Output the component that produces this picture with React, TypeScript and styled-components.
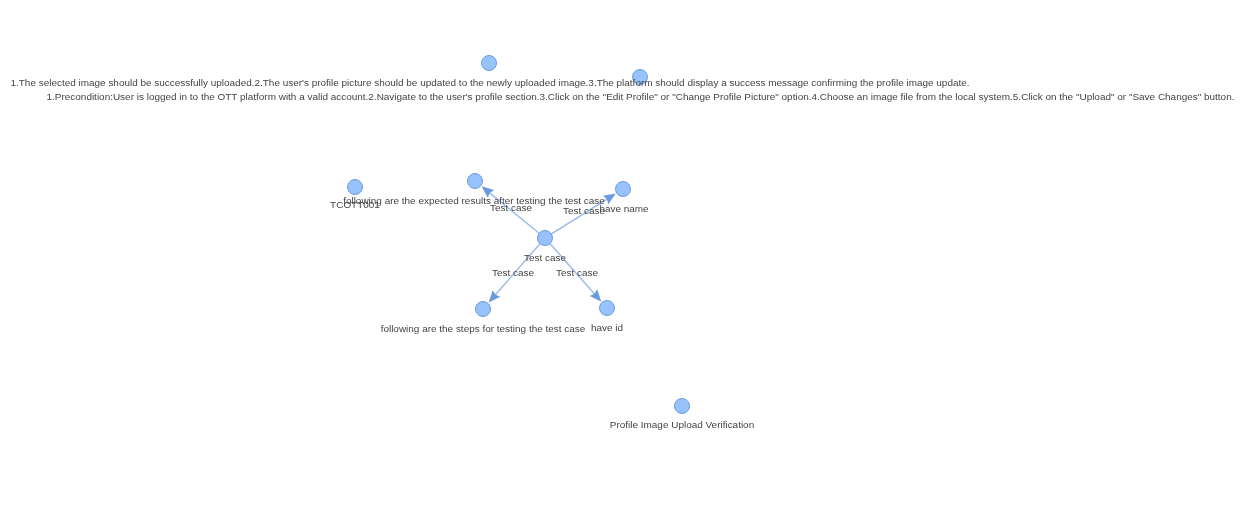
import React from 'react'
import styled, { createGlobalStyle } from 'styled-components'

const GlobalStyle = createGlobalStyle`
  html, body {
    margin: 0;
    padding: 0;
    background: #fff;
  }
`

const Canvas = styled.div`
  position: relative;
  width: 1257px;
  height: 505px;
  overflow: hidden;
  background: #fff;
  font-family: "Liberation Sans", Arial, sans-serif;
  filter: blur(0.55px);
`

const Edges = styled.svg`
  position: absolute;
  left: 0;
  top: 0;
`

const Node = styled.div<{ $x: number; $y: number }>`
  position: absolute;
  left: ${({ $x }) => $x - 8}px;
  top: ${({ $y }) => $y - 8}px;
  width: 16px;
  height: 16px;
  box-sizing: border-box;
  border-radius: 50%;
  background: #97c2fc;
  border: 1.5px solid #6a9be0;
`

const Label = styled.div<{ $x: number; $y: number }>`
  position: absolute;
  left: ${({ $x }) => $x}px;
  top: ${({ $y }) => $y}px;
  transform: translateX(-50%);
  white-space: nowrap;
  font-size: 9.96px;
  line-height: 12px;
  color: #444;
`

const nodes = [
  [489, 63],
  [640, 77],
  [355, 187],
  [475, 181],
  [623, 189],
  [545, 238],
  [483, 309],
  [607, 308],
  [682, 406],
]

const labels: [string, number, number][] = [
  ['1.The selected image should be successfully uploaded.2.The user\'s profile picture should be updated to the newly uploaded image.3.The platform should display a success message confirming the profile image update.', 490, 77],
  ['1.Precondition:User is logged in to the OTT platform with a valid account.2.Navigate to the user\'s profile section.3.Click on the "Edit Profile" or "Change Profile Picture" option.4.Choose an image file from the local system.5.Click on the "Upload" or "Save Changes" button.', 640.5, 91],
  ['TCOTT001', 355, 199],
  ['following are the expected results after testing the test case', 474, 195],
  ['have name', 624, 203],
  ['following are the steps for testing the test case', 483, 323],
  ['have id', 607, 322],
  ['Profile Image Upload Verification', 682, 419],
  ['Test case', 511, 202],
  ['Test case', 584, 205],
  ['Test case', 545, 252],
  ['Test case', 513, 267],
  ['Test case', 577, 267],
]

const edges = [
  { x: 475, y: 181 },
  { x: 623, y: 189 },
  { x: 483, y: 309 },
  { x: 607, y: 308 },
]

const from = { x: 545, y: 238 }

// one edge from the centre node, stopped short of the target with an arrow head
const Edge = ({ x, y }: { x: number; y: number }) => {
  const dx = x - from.x
  const dy = y - from.y
  const len = Math.sqrt(dx * dx + dy * dy)
  const ux = dx / len
  const uy = dy / len
  const tipX = x - ux * 8.5
  const tipY = y - uy * 8.5
  const baseX = tipX - ux * 12
  const baseY = tipY - uy * 12
  const head = [
    `${tipX},${tipY}`,
    `${baseX - uy * 5},${baseY + ux * 5}`,
    `${baseX + ux * 1.5},${baseY + uy * 1.5}`,
    `${baseX + uy * 5},${baseY - ux * 5}`,
  ].join(' ')
  return (
    <g>
      <line x1={from.x} y1={from.y} x2={baseX + ux * 2} y2={baseY + uy * 2} stroke="#9dbdec" strokeWidth="1.5" />
      <polygon points={head} fill="#6a9be0" />
    </g>
  )
}

export default function App() {
  return (
    <>
      <GlobalStyle />
      <Canvas>
        <Edges width="1257" height="505" viewBox="0 0 1257 505">
          {edges.map((e) => (
            <Edge key={`${e.x}-${e.y}`} x={e.x} y={e.y} />
          ))}
        </Edges>
        {nodes.map(([x, y]) => (
          <Node key={`${x}-${y}`} $x={x} $y={y} />
        ))}
        {labels.map(([text, x, y]) => (
          <Label key={`${text}-${x}`} $x={x} $y={y}>
            {text}
          </Label>
        ))}
      </Canvas>
    </>
  )
}
